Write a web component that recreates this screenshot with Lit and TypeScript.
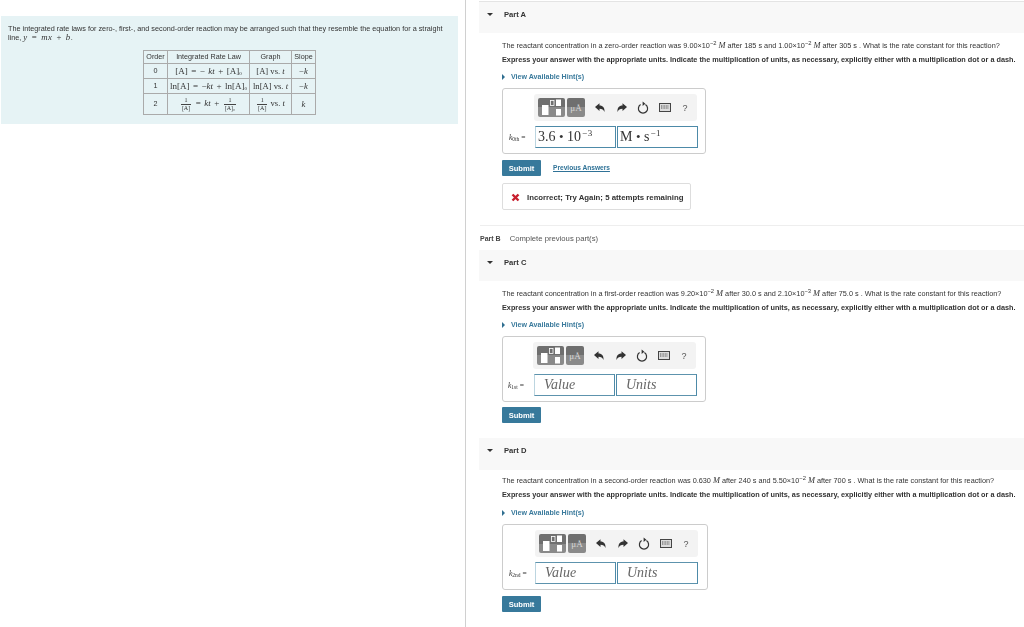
import { LitElement, html, css } from "lit";
import { customElement } from "lit/decorators.js";

const frac = (top: unknown, bottom: unknown) =>
  html`<span class="frac"><span>${top}</span><span class="den">${bottom}</span></span>`;

const toolbar = html`<div class="toolbar">
  <div class="tbtn tpl">
    <svg width="27" height="19" viewBox="0 0 27 19">
      <rect x="4" y="7" width="6.5" height="10" fill="#fff"></rect>
      <rect x="12.5" y="2.5" width="3.5" height="5" fill="none" stroke="#fff" stroke-width=".8"></rect>
      <rect x="18" y="1.5" width="5" height="6.5" fill="#fff"></rect>
      <rect x="18" y="11" width="5" height="6.5" fill="#fff"></rect>
    </svg>
  </div>
  <div class="tbtn mu"><span class="mu-t">μÅ</span></div>
  <svg class="ico first" width="12" height="12" viewBox="0 0 12 12"><path d="M1 5 L5.5 1.2 V3.6 C9 3.6 10.8 6 10.5 10 C9.6 7.6 8 6.8 5.5 6.8 V9 Z" fill="#333"></path></svg>
  <svg class="ico" width="12" height="12" viewBox="0 0 12 12"><path d="M11 5 L6.5 1.2 V3.6 C3 3.6 1.2 6 1.5 10 C2.4 7.6 4 6.8 6.5 6.8 V9 Z" fill="#333"></path></svg>
  <svg class="ico reset" width="12" height="13" viewBox="0 0 12 13"><path d="M3.6 3.6 A4.6 4.6 0 1 0 8.4 3.6" fill="none" stroke="#333" stroke-width="1.2"></path><path d="M5.6 0.4 V5 L8.4 2.8 Z" fill="#333"></path></svg>
  <svg class="ico" width="12" height="9" viewBox="0 0 12 9"><rect x=".5" y=".5" width="11" height="8" fill="#ddd" stroke="#444"></rect><path d="M2 3h8M2 5h8" stroke="#555" stroke-width="1" stroke-dasharray="1 .6"></path></svg>
  <span class="help">?</span>
</div>`;

const answer = (label: string, sub: string, filled: boolean, cls: string) => html`
  <div class="box ${cls}">
    ${toolbar}
    <div class="answer">
      <span class="lbl"><i>k</i><sub>${sub}</sub>${label}</span>
      ${filled
        ? html`<div class="inp val">3.6 <span class="dot">•</span> 10<sup>−3</sup></div><div class="inp val">M <span class="dot">•</span> s<sup>−1</sup></div>`
        : html`<div class="inp ph">Value</div><div class="inp ph">Units</div>`}
    </div>
  </div>`;

const hint = html`<div class="hint"><span class="tri"></span>View Available Hint(s)</div>`;
const express = html`<p class="express">Express your answer with the appropriate units. Indicate the multiplication of units, as necessary, explicitly either with a multiplication dot or a dash.</p>`;
const band = (name: string, cls = "") => html`<div class="band ${cls}"><span class="caret"></span><b>${name}</b></div>`;
const M = html`<i class="m">M</i>`;
const x10 = (n: string) => html`×10<sup>−${n}</sup>`;

@customElement("app-root")
export class AppRoot extends LitElement {
  static styles = css`
    :host { display: block; width: 1024px; height: 627px; overflow: hidden; background: #fff;
      font-family: "Liberation Sans", Arial, sans-serif; color: #333; }
    .page { display: grid; grid-template-columns: 466px 1fr; height: 627px; filter: blur(.3px); }
    .left { padding-top: 16px; border-right: 1px solid #d0d0d0; }
    .intro { width: 457px; margin-left: 1px; height: 108px; box-sizing: border-box; background: #e6f3f5; padding: 8px 7px 0; }
    .intro p { margin: 0; font-size: 7.28px; line-height: 9px; width: 440px; color: #333; }
    .m { font-family: "Liberation Serif", serif; font-style: italic; }
    .eq { font-family: "Liberation Serif", serif; font-size: 8.8px; word-spacing: 1.5px; letter-spacing: .4px; }
    table { border-collapse: collapse; margin: 8px 0 0 135px; table-layout: fixed; width: 172px;
      border: 1px solid #555; font-size: 7.2px; text-align: center; background: #e6f3f5; }
    td, th { border: 1px solid #aaa; padding: 0; font-weight: normal; white-space: nowrap; height: 14px; line-height: 10px; }
    th { height: 12px; }
    tr:last-child td { height: 20px; }
    .c1 { width: 23px; } .c2 { width: 81px; } .c3 { width: 41px; border-left: 1px solid #555; } .c4 { width: 23px; }
    .mt { font-family: "Liberation Serif", serif; font-size: 8.6px; }
    .law { font-size: 9px; word-spacing: 1.2px; }
    .mt sub { font-size: 5px; line-height: 0; vertical-align: -1px; }
    .frac { display: inline-flex; flex-direction: column; align-items: center; vertical-align: middle;
      font-size: 6px; line-height: 6.5px; margin: 0 1px; }
    .den { border-top: .7px solid #444; padding: 0 1px; }
    .right { padding-top: 1px; padding-left: 13px; display: flex; flex-direction: column; min-width: 0; }
    .band { height: 32px; background: #f8f8f8; border-top: 1px solid #e4e4e4; display: flex; align-items: center;
      font-size: 7.6px; color: #333; margin-bottom: 8px; padding-bottom: 6px; box-sizing: border-box; flex: none; }
    .caret { width: 0; height: 0; border: 3px solid transparent; border-top: 3.5px solid #333; border-bottom: 0;
      margin: 0 11.5px 0 7.5px; }
    .body { padding-left: 23px; }
    .q { margin: 0; font-size: 7.3px; line-height: 10px; white-space: nowrap; height: 10px; }
    .q sup { font-size: 5.8px; line-height: 0; }
    .q .m { font-size: 8.4px; }
    .express { margin: 4px 0 0; font-size: 7.28px; font-weight: bold; line-height: 10px; white-space: nowrap; color: #333; }
    .hint { margin-top: 7px; font-size: 7.1px; font-weight: bold; line-height: 10px; color: #3a7a9c; display: flex; align-items: center; }
    .tri { width: 0; height: 0; border: 3px solid transparent; border-left: 3.5px solid #2f6e90; border-right: 0; margin-right: 6px; }
    .box { margin-top: 6px; width: 204px; height: 66px; box-sizing: border-box; border: 1px solid #ccc; border-radius: 3px;
      padding: 5px 8px 0 31px; }
    .box.d { width: 206px; padding-left: 32px; padding-right: 9px; }
    .box.d .answer { margin-left: -26px; }
    .box.c { padding-left: 30px; padding-right: 9px; }
    .toolbar { height: 27px; width: 163px; box-sizing: border-box; background: #f3f3f3; border-radius: 3px; display: flex; align-items: center; padding-left: 4px; }
    .tbtn { height: 19px; border-radius: 2px; background: linear-gradient(#6f6f6f 0 50%, #8a8a8a 50% 100%);
      display: flex; align-items: center; justify-content: center; box-sizing: border-box; }
    .tpl { width: 27px; overflow: hidden; }
    .mu { width: 18px; margin-left: 2px; }
    .mu-t { font-family: "Liberation Serif", serif; color: #d8d8d8; font-size: 9px; }
    .ico { margin-left: 10px; flex: none; }
    .ico.first { margin-left: 8.5px; }
    .ico.reset { margin-left: 9.5px; }
    .help { margin-left: 11.5px; font-size: 9px; color: #555; }
    .answer { display: flex; align-items: center; margin-top: 5px; margin-left: -25px; }
    .lbl { width: 26px; flex: none; font-family: "Liberation Serif", serif; font-size: 7.5px; color: #333; white-space: nowrap; }
    .lbl sub { font-size: 5.5px; line-height: 0; vertical-align: -1px; }
    .inp { width: 81px; height: 22px; box-sizing: border-box; border: 1px solid #4d8aa8; margin-right: 1px; flex: none;
      font-family: "Liberation Serif", serif; display: flex; align-items: center; color: #333; white-space: pre; }
    .inp:first-of-type { border-left-color: #bcd5e0; }
    .val { font-size: 14px; padding-left: 2px; }
    .dot { font-size: 13px; }
    .val sup { font-size: 9px; align-self: flex-start; line-height: 12px; margin-left: 1px; letter-spacing: .5px; }
    .ph { font-style: italic; font-size: 14px; color: #666; padding-left: 9px; border-top-color: #5d93ad; border-bottom-color: #5d93ad; }
    .actions { display: flex; align-items: center; margin-top: 6px; }
    .cc .actions { margin-top: 5px; }
    .dd .hint { margin-top: 8px; }
    .submit { width: 39px; height: 16px; background: #37799b; color: #fff; font-size: 7.6px; font-weight: bold;
      display: flex; align-items: center; justify-content: center; border-radius: 1px; }
    .prev { margin-left: 12px; margin-bottom: 2px; font-size: 6.6px; font-weight: bold; color: #2f7297; text-decoration: underline; }
    .msg { margin-top: 7px; width: 189px; height: 27px; box-sizing: border-box; border: 1px solid #ddd; border-radius: 2px;
      display: flex; align-items: center; padding: 1px 0 0 8px; font-size: 7.8px; font-weight: bold; color: #333; white-space: nowrap; }
    .msg svg { margin-right: 7px; flex: none; }
    .partb { margin-top: 15px; height: 25px; border-top: 1px solid #eee; box-sizing: border-box; display: flex; align-items: center;
      font-size: 7.7px; color: #555; margin-left: 1px; flex: none; }
    .partb b { margin-right: 9px; color: #444; font-size: 7px; }
    .gap-d { margin-top: 15px; }
    .band.d { margin-bottom: 6px; height: 32px; border-top: 0; padding-bottom: 7px; }
    .band.c { border-top: 0; height: 31px; padding-bottom: 7px; }
  `;

  render() {
    return html`<div class="page">
      <div class="left">
        <div class="intro">
          <p>The integrated rate laws for zero-, first-, and second-order reaction may be arranged such that they resemble the equation for a straight line, <span class="eq"><i>y</i> = <i>mx</i> + <i>b</i></span>.</p>
          <table>
            <tr><th class="c1">Order</th><th class="c2">Integrated Rate Law</th><th class="c3">Graph</th><th class="c4">Slope</th></tr>
            <tr><td>0</td><td class="mt law">[A] = − <i>kt</i> + [A]<sub>0</sub></td><td class="c3 mt">[A] vs. <i>t</i></td><td class="mt">−<i>k</i></td></tr>
            <tr><td>1</td><td class="mt law">ln[A] = −<i>kt</i> + ln[A]<sub>0</sub></td><td class="c3 mt">ln[A] vs. <i>t</i></td><td class="mt">−<i>k</i></td></tr>
            <tr><td>2</td><td class="mt law">${frac("1", "[A]")} = <i>kt</i> + ${frac("1", "[A]₀")}</td><td class="c3 mt">${frac("1", "[A]")} vs. <i>t</i></td><td class="mt"><i>k</i></td></tr>
          </table>
        </div>
      </div>
      <div class="right">
        ${band("Part A")}
        <div class="body">
          <p class="q">The reactant concentration in a zero-order reaction was 9.00${x10("2")} ${M} after 185 s and 1.00${x10("2")} ${M} after 305 s . What is the rate constant for this reaction?</p>
          ${express}${hint}
          ${answer(" =", "0th", true, "a")}
          <div class="actions"><div class="submit">Submit</div><span class="prev">Previous Answers</span></div>
          <div class="msg">
            <svg width="9" height="9" viewBox="0 0 9 9"><path d="M1.5 1.5 L7.5 7.5 M7.5 1.5 L1.5 7.5" stroke="#c8202f" stroke-width="2.4"></path></svg>
            Incorrect; Try Again; 5 attempts remaining
          </div>
        </div>
        <div class="partb"><b>Part B</b> Complete previous part(s)</div>
        ${band("Part C", "c")}
        <div class="body cc">
          <p class="q">The reactant concentration in a first-order reaction was 9.20${x10("2")} ${M} after 30.0 s and 2.10${x10("3")} ${M} after 75.0 s . What is the rate constant for this reaction?</p>
          ${express}${hint}
          ${answer(" =", "1st", false, "c")}
          <div class="actions"><div class="submit">Submit</div></div>
        </div>
        <div class="gap-d"></div>
        ${band("Part D", "d")}
        <div class="body dd">
          <p class="q">The reactant concentration in a second-order reaction was 0.630 ${M} after 240 s and 5.50${x10("2")} ${M} after 700 s . What is the rate constant for this reaction?</p>
          ${express}${hint}
          ${answer(" =", "2nd", false, "d")}
          <div class="actions"><div class="submit">Submit</div></div>
        </div>
      </div>
    </div>`;
  }
}
